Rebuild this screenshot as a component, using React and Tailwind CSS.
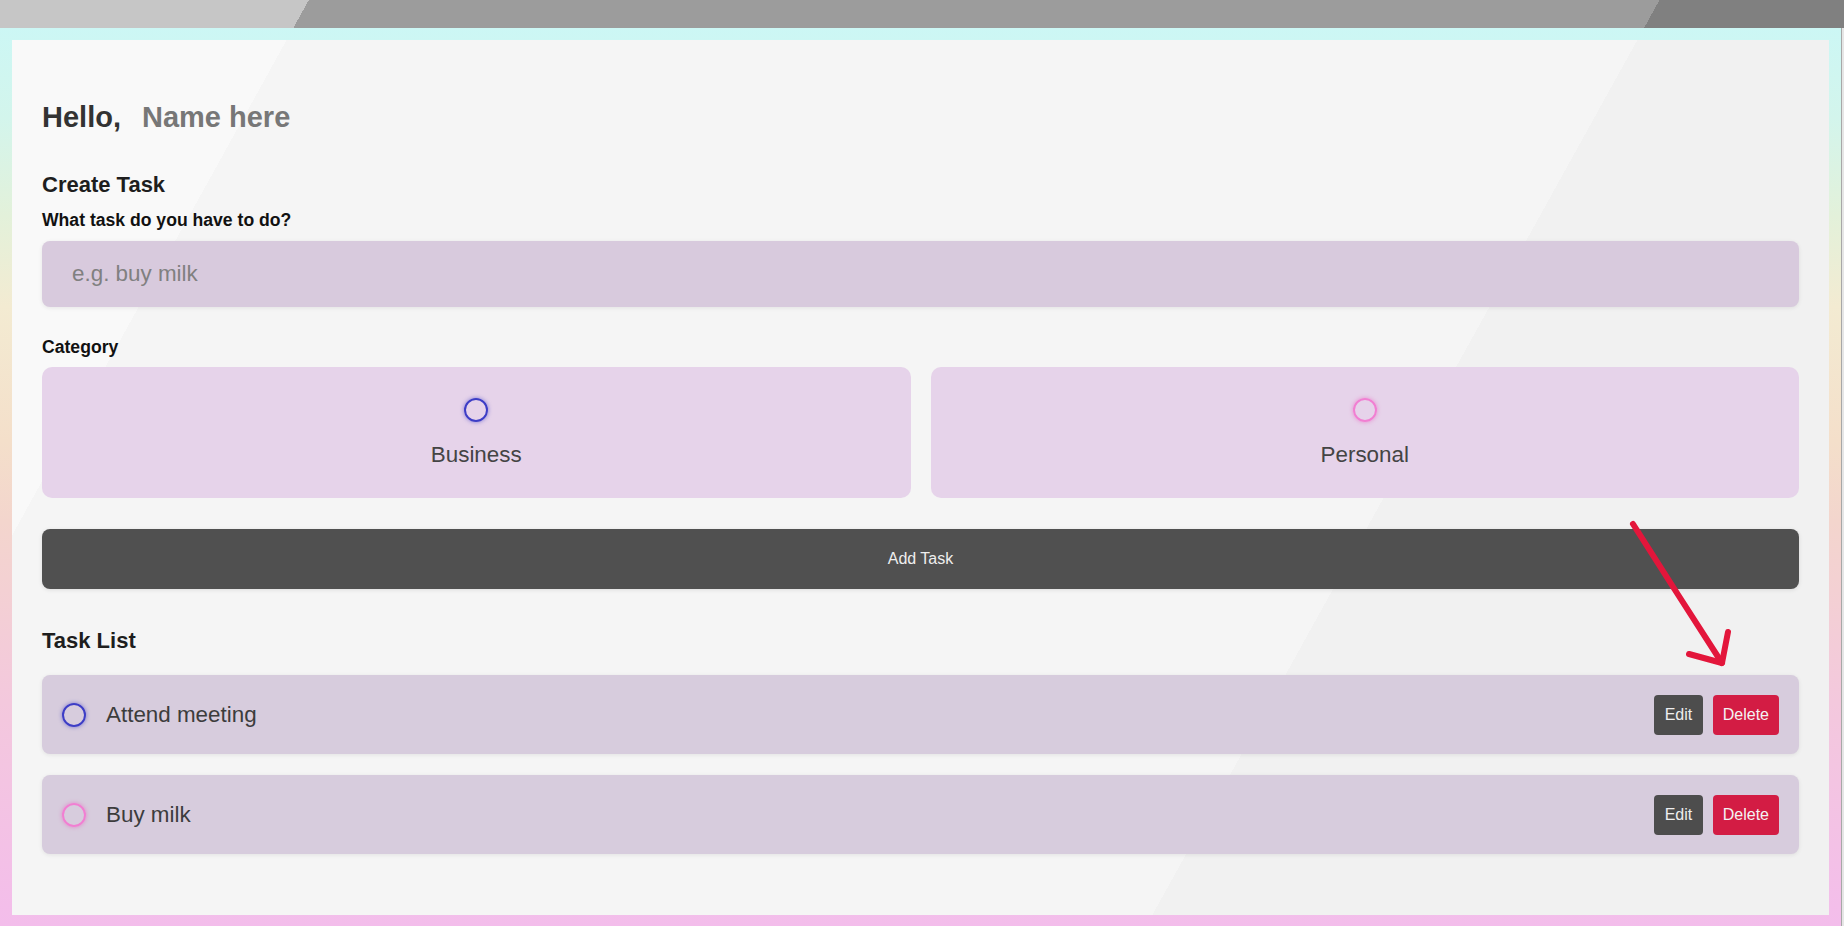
import React from "react";

const tasks = [
  { id: 1, text: "Attend meeting", category: "business" },
  { id: 2, text: "Buy milk", category: "personal" },
];

function Bubble({ category }) {
  // ring used for categories and task rows
  const ring =
    category === "business"
      ? "border-[#3d3dc6] shadow-[0_0_4px_rgba(61,61,198,0.6)]"
      : "border-[#f17fd2] shadow-[0_0_4px_rgba(234,90,190,0.6)]";
  return <span className={`block w-6 h-6 shrink-0 rounded-full border-2 ${ring}`} />;
}

function CategoryOption({ category, label }) {
  return (
    <label className="flex-1 h-[131px] rounded-[10px] bg-[#e6d3ea] flex flex-col items-center pt-[31px] cursor-pointer">
      <Bubble category={category} />
      <span className="mt-[20px] text-[22.4px] leading-[26px] text-[#444444]">{label}</span>
    </label>
  );
}

function TaskRow({ task }) {
  return (
    <div className="h-[79px] rounded-[8px] bg-[#d7ccdd] shadow-[0_1px_4px_rgba(0,0,0,0.08)] flex items-center px-[20px]">
      <Bubble category={task.category} />
      <div className="ml-[20px] flex-1 text-[22.4px] leading-[26px] text-[#3c3c3c]">{task.text}</div>
      <div className="flex gap-[10px]">
        <button className="h-10 px-[10.5px] rounded-[4px] bg-[#4d4d4d] text-[16px] text-[#eeeeee]">Edit</button>
        <button className="h-10 px-[10px] rounded-[4px] bg-[#d31c44] text-[16px] text-[#f3f3f3]">Delete</button>
      </div>
    </div>
  );
}

export default function App() {
  return (
    <div className="relative w-[1844px] h-[926px] overflow-hidden font-['Liberation_Sans',Arial,sans-serif]">
      {/* browser strip */}
      <div className="h-[28px] bg-fixed bg-[linear-gradient(119deg,#c6c6c6_0_13.1%,#9c9c9c_13.1%_70.4%,#808080_70.4%)]" />

      <div className="flex h-[898px]">
        <div className="flex-1 pt-[12px] px-[12px] pb-[11px] bg-[linear-gradient(180deg,#ccf7f5_0%,#d3f5ec_10%,#e3f1da_21%,#f3ebd2_31%,#f4dfca_46%,#f3d5cd_55%,#f3c8dd_75%,#f3bdeb_100%)]">
          <main className="h-full px-[30px] pt-[60px] bg-fixed bg-[linear-gradient(119deg,#f9f9f9_0_13.1%,#f5f5f5_13.1%_70.4%,#f1f1f1_70.4%)]">
            <h1 className="flex items-baseline text-[29px] leading-[34px] font-bold">
              <span className="text-[#333333]">Hello,</span>
              <span className="ml-[21px] text-[#777777]">Name here</span>
            </h1>

            <h2 className="mt-[38px] text-[22px] leading-[26px] font-bold text-[#1e1e1e]">Create Task</h2>
            <div className="mt-[12px] text-[17.6px] leading-[20px] font-bold text-[#111111]">What task do you have to do?</div>
            <input
              type="text"
              placeholder="e.g. buy milk"
              className="mt-[11px] block w-full h-[66px] rounded-[8px] bg-[#d8cadd] shadow-[0_1px_4px_rgba(0,0,0,0.08)] pl-[30px] text-[22.4px] text-[#333333] placeholder:text-[#808080] outline-none"
            />

            <div className="mt-[30px] text-[17.6px] leading-[20px] font-bold text-[#111111]">Category</div>
            <div className="mt-[10px] flex gap-[20px]">
              <CategoryOption category="business" label="Business" />
              <CategoryOption category="personal" label="Personal" />
            </div>

            <button className="mt-[31px] block w-full h-[60px] rounded-[8px] bg-[#505050] shadow-[0_1px_4px_rgba(0,0,0,0.1)] text-[16px] text-[#eeeeee]">
              Add Task
            </button>

            <h2 className="mt-[39px] text-[22px] leading-[26px] font-bold text-[#1e1e1e]">Task List</h2>
            <div className="mt-[21px] flex flex-col gap-[21px]">
              {tasks.map((t) => (
                <TaskRow key={t.id} task={t} />
              ))}
            </div>
          </main>
        </div>
        <div className="w-[3px] bg-[#e6e6e6] border-l border-[#a8a8a8]" />
      </div>

      {/* hand-drawn annotation arrow */}
      <svg className="absolute left-[1620px] top-[515px] pointer-events-none" width="120" height="160" viewBox="0 0 120 160" fill="none">
        <path d="M13 9 Q58 80 102 148" stroke="#e3163b" strokeWidth="6" strokeLinecap="round" />
        <path d="M108 117 L102 148 L69 139" stroke="#e3163b" strokeWidth="6" strokeLinecap="round" strokeLinejoin="round" />
      </svg>
    </div>
  );
}
